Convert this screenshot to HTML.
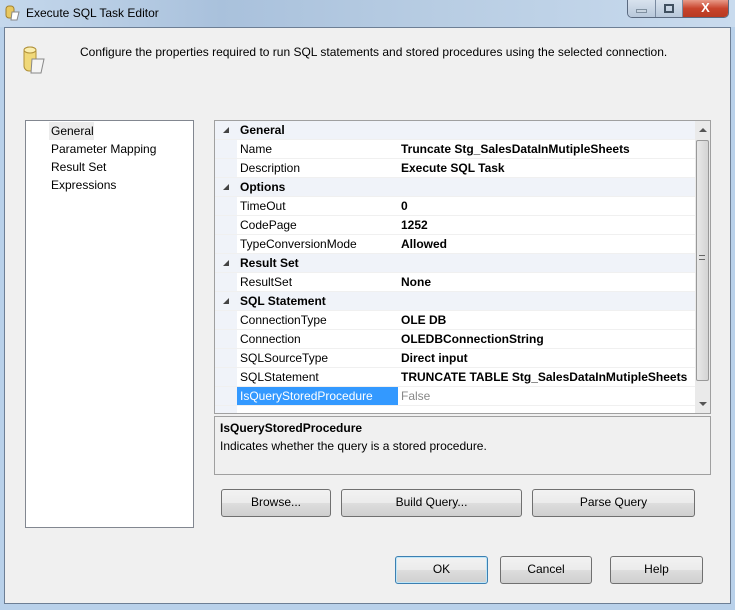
<!DOCTYPE html>
<html><head><style>
*{margin:0;padding:0;box-sizing:border-box}
body{width:735px;height:610px;position:relative;overflow:hidden;font-family:"Liberation Sans",sans-serif;font-size:12px;color:#000;background:#b9d1ea}
.abs{position:absolute}
#title{left:0;top:0;width:735px;height:27px;background:linear-gradient(90deg,#c5d8ec,#a9c1dc 30%,#b8cde3 60%,#c9dbee)}
#client{left:4px;top:27px;width:727px;height:577px;background:#f0f0f0;border:1px solid #6d7f95}
.row{position:absolute;left:0;width:480px;height:19px;line-height:18px;border-bottom:1px solid #f0f0f0}
.cat{background:#f0f3f9;font-weight:bold}
.lbl{position:absolute;left:22px;width:161px;padding-left:3px;height:18px;background:#fff}
.val{position:absolute;left:183px;width:297px;padding-left:3px;height:18px;background:#fff;font-weight:bold}
.tri{position:absolute;left:8px;top:6px;width:0;height:0;border-left:6px solid transparent;border-bottom:6px solid #444}
.btn{position:absolute;height:28px;border:1px solid #707070;border-radius:3px;background:linear-gradient(#f2f2f2 0%,#ebebeb 50%,#dddddd 51%,#cfcfcf 100%);text-align:center;line-height:25px}
</style></head><body>
<div id="title" class="abs"></div>
<svg class="abs" style="left:5px;top:5px" width="16" height="16"><rect x="1" y="1" width="8" height="12" rx="3" fill="#e8c860" stroke="#a08030"/><path d="M7 7h7l-2 8H6z" fill="#fff" stroke="#888"/></svg>
<div class="abs" style="left:26px;top:6px;font-size:12px">Execute SQL Task Editor</div>
<div class="abs" style="left:627px;top:0;width:102px;height:18px;border:1px solid #5a6a80;border-top:none;border-radius:0 0 5px 5px;overflow:hidden;display:flex">
<div style="width:28px;background:linear-gradient(#d8e2ee,#b8c8da);border-right:1px solid #7a8aa0;position:relative"><div class="abs" style="left:8px;top:9px;width:11px;height:4px;background:#c8d4e0;border:1px solid #8090a0"></div></div>
<div style="width:27px;background:linear-gradient(#d8e2ee,#b8c8da);border-right:1px solid #7a8aa0;position:relative"><div class="abs" style="left:8px;top:4px;width:10px;height:9px;border:2px solid #405060"></div></div>
<div style="flex:1;background:linear-gradient(#e89a88,#c8442c 50%,#b83a22);color:#fff;font-weight:bold;text-align:center;line-height:16px;font-size:13px">X</div></div>
<div id="client" class="abs"></div>
<svg class="abs" style="left:22px;top:44px" width="26" height="32"><rect x="2" y="3" width="12" height="24" rx="5" fill="#f0d878" stroke="#b09038"/><ellipse cx="8" cy="6" rx="6" ry="3" fill="#faeeb0" stroke="#b09038"/><path d="M10 15h12l-3 14H9z" fill="#f4f4f4" stroke="#888"/></svg>
<div class="abs" style="left:80px;top:45px">Configure the properties required to run SQL statements and stored procedures using the selected connection.</div>
<div class="abs" style="left:25px;top:120px;width:169px;height:408px;background:#fff;border:1px solid #828790"></div>
<div class="abs" style="left:49px;top:122px;width:45px;height:18px;background:#ececec"></div>
<div class="abs" style="left:51px;top:124px;line-height:14px">General<br><span style="display:block;margin-top:4px">Parameter Mapping</span><span style="display:block;margin-top:4px">Result Set</span><span style="display:block;margin-top:4px">Expressions</span></div>
<div class="abs" style="left:214px;top:120px;width:497px;height:294px;border:1px solid #a0a0a0;background:#f0f3f9;overflow:hidden">
<div class="abs" style="left:0;top:0;width:480px;height:292px">
<div class="row cat" style="top:0"><div class="tri"></div><span style="position:absolute;left:25px">General</span></div>
<div class="row" style="top:19px"><div class="lbl">Name</div><div class="val">Truncate Stg_SalesDataInMutipleSheets</div></div>
<div class="row" style="top:38px"><div class="lbl">Description</div><div class="val">Execute SQL Task</div></div>
<div class="row cat" style="top:57px"><div class="tri"></div><span style="position:absolute;left:25px">Options</span></div>
<div class="row" style="top:76px"><div class="lbl">TimeOut</div><div class="val">0</div></div>
<div class="row" style="top:95px"><div class="lbl">CodePage</div><div class="val">1252</div></div>
<div class="row" style="top:114px"><div class="lbl">TypeConversionMode</div><div class="val">Allowed</div></div>
<div class="row cat" style="top:133px"><div class="tri"></div><span style="position:absolute;left:25px">Result Set</span></div>
<div class="row" style="top:152px"><div class="lbl">ResultSet</div><div class="val">None</div></div>
<div class="row cat" style="top:171px"><div class="tri"></div><span style="position:absolute;left:25px">SQL Statement</span></div>
<div class="row" style="top:190px"><div class="lbl">ConnectionType</div><div class="val">OLE DB</div></div>
<div class="row" style="top:209px"><div class="lbl">Connection</div><div class="val">OLEDBConnectionString</div></div>
<div class="row" style="top:228px"><div class="lbl">SQLSourceType</div><div class="val">Direct input</div></div>
<div class="row" style="top:247px"><div class="lbl">SQLStatement</div><div class="val">TRUNCATE TABLE Stg_SalesDataInMutipleSheets</div></div>
<div class="row" style="top:266px"><div class="lbl" style="background:#3399ff;color:#fff">IsQueryStoredProcedure</div><div class="val" style="font-weight:normal;color:#888">False</div></div>
<div class="row" style="top:285px"><div class="lbl"></div><div class="val"></div></div>
</div>
<div class="abs" style="left:480px;top:0;width:15px;height:292px;background:#eaeaea">
<div class="abs" style="left:4px;top:7px;border-left:4px solid transparent;border-right:4px solid transparent;border-bottom:4px solid #555"></div>
<div class="abs" style="left:1px;top:19px;width:13px;height:241px;background:linear-gradient(90deg,#e8e8e8,#d4d4d4);border:1px solid #999;border-radius:2px"></div>
<div class="abs" style="left:4px;top:134px;width:6px;height:5px;border-top:1px solid #666;border-bottom:1px solid #666"></div>
<div class="abs" style="left:4px;top:281px;border-left:4px solid transparent;border-right:4px solid transparent;border-top:4px solid #555"></div>
</div></div>
<div class="abs" style="left:214px;top:416px;width:497px;height:59px;border:1px solid #a0a0a0;background:#f0f0f0;padding:2px 5px;line-height:18px"><b>IsQueryStoredProcedure</b><br>Indicates whether the query is a stored procedure.</div>
<div class="btn" style="left:221px;top:489px;width:110px">Browse...</div>
<div class="btn" style="left:341px;top:489px;width:181px">Build Query...</div>
<div class="btn" style="left:532px;top:489px;width:163px">Parse Query</div>
<div class="btn" style="left:395px;top:556px;width:93px;border-color:#3c7fb1;box-shadow:inset 0 0 0 1px #bfe6f8">OK</div>
<div class="btn" style="left:500px;top:556px;width:92px">Cancel</div>
<div class="btn" style="left:610px;top:556px;width:93px">Help</div>
</body></html>
